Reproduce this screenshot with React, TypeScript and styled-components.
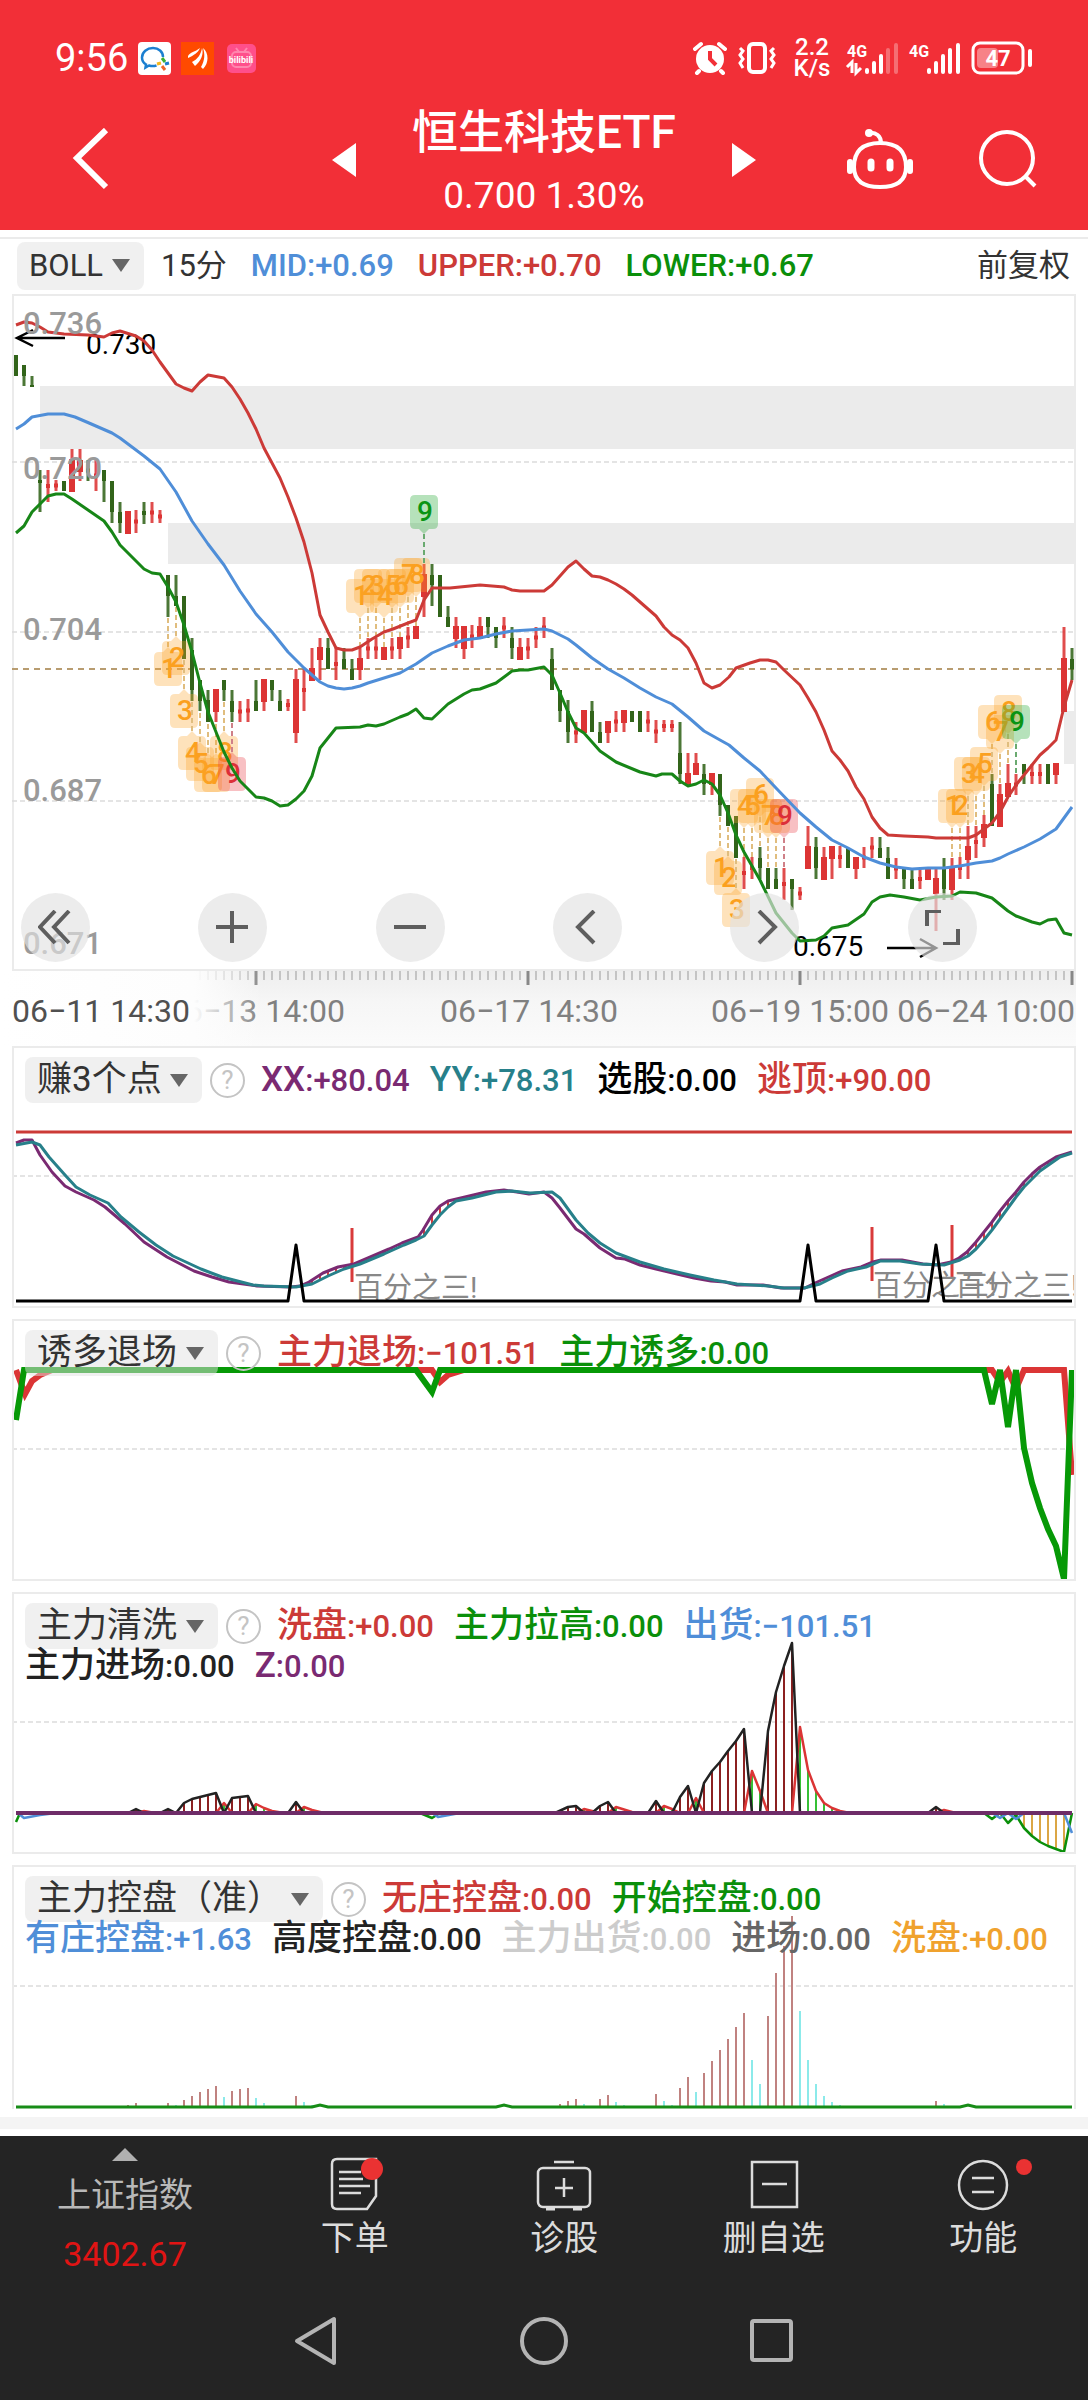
import React from "react";
import styled, { createGlobalStyle } from "styled-components";

const color = {
  brand: "#f22f37",
  red: "#cc3a37",
  green: "#0a8f0a",
  blue: "#4f8ed8",
  purple: "#7a2a72",
  teal: "#27808a",
  ink: "#222222",
  pill: "rgba(225, 225, 225, 0.5)",
  frame: "#ebebeb",
  grid: "#dcdcdc",
  dark: "#242424",
  icon: "#dcdcdc",
};

const GlobalStyle = createGlobalStyle`
  * { box-sizing: border-box; }
  body {
    margin: 0;
    background: #fff;
    color: ${color.ink};
    font-family: Roboto, "Noto Sans CJK SC", sans-serif;
  }
  button, select { font: inherit; color: inherit; border: 0; padding: 0; margin: 0; background: none; }
  svg { display: block; }
`;

/* ---------- layout ---------- */

const Header = styled.header`
  background: ${color.brand};
  color: #fff;
  padding: 36px 55px 0;
`;

const StatusBar = styled.div`
  display: flex;
  align-items: center;
  justify-content: space-between;
  height: 44px;
`;

const StatusGroup = styled.div`
  display: flex;
  align-items: center;
  gap: 10px;
`;

const Clock = styled.span`
  font-size: 38px;
  line-height: 44px;
`;

const Speed = styled.span`
  font-size: 24px;
  line-height: 21px;
  text-align: center;
  font-weight: 500;
  width: 50px;
  padding: 0 6px;
`;

const TitleBar = styled.div`
  display: grid;
  grid-template-columns: 1fr auto 1fr;
  align-items: center;
  height: 150px;
  padding-top: 10px;
`;

const TitleActions = styled.div`
  display: flex;
  justify-content: flex-end;
  gap: 64px;
  margin-right: -5px;
`;

const TitleCenter = styled.div`
  display: grid;
  grid-template-columns: 24px 376px 24px;
  align-items: center;
  text-align: center;
`;

const TitleText = styled.div`
  padding-top: 8px;
`;

const Title = styled.h1`
  margin: 0;
  font-size: 46px;
  font-weight: 500;
  line-height: 64px;
`;

const Quote = styled.p`
  margin: 0;
  font-size: 37px;
  line-height: 64px;
`;

const IconButton = styled.button`
  display: grid;
  justify-items: start;
  cursor: pointer;
`;

const Toolbar = styled.div`
  display: flex;
  align-items: center;
  gap: 17px;
  margin-top: 7px;
  border-top: 2px solid ${color.frame};
  padding: 2px 18px 4px 17px;
  height: 57px;
`;

const Pill = styled.label<{ $size: number }>`
  display: inline-grid;
  align-items: center;
  background: ${color.pill};
  border-radius: 8px;
  height: ${(p) => p.$size}px;
  color: #333;

  > * { grid-area: 1 / 1; }
  > svg { justify-self: end; margin-right: 14px; pointer-events: none; }
`;

const PillSelect = styled.select<{ $font: number }>`
  appearance: none;
  font-size: ${(p) => p.$font}px;
  line-height: 44px;
  padding: 0 40px 0 12px;
  cursor: pointer;
`;

const Values = styled.div`
  display: flex;
  gap: 24px;
  flex: 1;
  margin-left: 7px;
`;

const Plain = styled.span<{ $tone?: string }>`
  font-size: 31px;
  line-height: 44px;
  white-space: nowrap;
  color: ${(p) => p.$tone || "#333"};
`;

const Reading = styled(Plain)`
  font-weight: 500;
`;

const Main = styled.main`
  display: grid;
`;

const PriceBox = styled.section`
  display: grid;
  margin: 0 12px;
  box-shadow: inset 0 0 0 2px ${color.frame};

  > * { grid-area: 1 / 1; }
`;

const ChartSvg = styled.svg`
  width: 100%;
  height: auto;
`;

const ZoomRow = styled.div`
  display: grid;
  grid-template-columns: repeat(6, 1fr);
  align-self: end;
  padding: 0 0 9px 9px;
  margin-right: -9px;
`;

const RoundButton = styled.button`
  display: grid;
  place-items: center;
  width: 69px;
  height: 69px;
  border-radius: 50%;
  background: rgba(226, 226, 226, 0.65);
  cursor: pointer;
`;

const Panels = styled.div`
  display: grid;
  gap: 11px;
  padding: 0 12px 8px;
`;

const Panel = styled.section<{ $open?: boolean }>`
  display: grid;
  min-width: 0;
  border: 2px solid ${color.frame};
  border-bottom-width: ${(p) => (p.$open ? 0 : 2)}px;

  > * { grid-area: 1 / 1; min-width: 0; }
`;

const LegendArea = styled.div`
  align-self: start;
  padding: 9px 11px;
`;

const LegendRow = styled.div<{ $height: number }>`
  display: flex;
  align-items: center;
  gap: 20px;
  height: ${(p) => p.$height}px;
`;

const Selector = styled.div`
  display: flex;
  align-items: center;
  gap: 8px;
  margin-right: -4px;
`;

const Help = styled.button`
  width: 35px;
  height: 35px;
  border: 2px solid #c4c4c4;
  border-radius: 50%;
  color: #c4c4c4;
  font-size: 26px;
  line-height: 30px;
  cursor: pointer;
`;

const Entry = styled.span<{ $tone: string }>`
  display: inline-flex;
  align-items: baseline;
  color: ${(p) => p.$tone};
  font-weight: 500;
  line-height: 44px;
  white-space: nowrap;
`;

const Name = styled.span`
  font-size: 35px;
`;

const Amount = styled.span`
  font-size: 31px;
`;

const Divider = styled.div`
  height: 19px;
  background: #f4f4f4;
  border-bottom: 7px solid #fff;
`;

const Footer = styled.footer`
  background: ${color.dark};
  color: #dcdcdc;
`;

const TabBar = styled.nav`
  display: grid;
  grid-template-columns: 250px repeat(4, 1fr);
  height: 156px;
`;

const Tab = styled.button`
  display: grid;
  justify-items: center;
  align-content: start;
  gap: 1px;
  padding-top: 20px;
  font-size: 34px;
  line-height: 50px;
  cursor: pointer;
`;

const IndexTab = styled(Tab)`
  gap: 9px;
  padding-top: 12px;
  color: #b8b8b8;
`;

const IndexValue = styled.span`
  color: #e01414;
`;

const SystemBar = styled.div`
  display: flex;
  justify-content: center;
  gap: 180px;
  padding: 24px 0 34px;
`;

/* ---------- data ---------- */

type Candle = [up: 0 | 1, high: number, low: number, top?: number, bottom?: number];

const candles: Candle[] = [
  [0, 355, 376, 355, 376], [0, 365, 386, 365, 376], [0, 376, 387, 385, 387], [0, 470, 512, 480, 483],
  [1, 470, 502], [1, 480, 491], [0, 481, 491, 481, 491], [1, 449, 492, 459, 492],
  [1, 449, 481, 460, 472], [0, 460, 481], [1, 460, 491], [0, 470, 502, 470, 481],
  [0, 481, 523, 481, 512], [0, 502, 533, 512, 523], [1, 511, 534, 511, 534], [1, 510, 533],
  [0, 502, 524], [1, 502, 523], [1, 510, 523], [0, 575, 617, 575, 596],
  [0, 575, 606, 596, 606], [0, 596, 659, 596, 659], [0, 638, 701, 650, 690], [0, 680, 711, 680, 701],
  [0, 690, 722, 700, 722], [1, 689, 722, 689, 712], [0, 680, 701, 680, 690], [0, 690, 722, 701, 712],
  [1, 701, 722], [1, 699, 722], [0, 680, 711, 701, 711], [1, 679, 711, 679, 702],
  [0, 680, 701, 680, 690], [0, 690, 711, 701, 711], [1, 699, 711], [1, 669, 743, 679, 733],
  [1, 669, 711], [1, 648, 681, 668, 681], [1, 638, 680, 647, 660], [0, 638, 669, 648, 669],
  [1, 648, 680], [0, 648, 669, 659, 669], [0, 659, 680, 669, 680], [1, 648, 680, 658, 670],
  [1, 638, 659], [1, 638, 659], [1, 647, 660, 647, 660], [1, 638, 659],
  [1, 637, 659, 637, 649], [1, 627, 648], [1, 626, 639, 626, 639], [1, 564, 617, 574, 597],
  [0, 564, 606, 575, 585], [0, 575, 617, 575, 617], [0, 606, 627, 617, 627], [1, 617, 648, 626, 639],
  [1, 626, 659, 626, 649], [1, 625, 648], [1, 617, 639, 626, 639], [0, 617, 638, 617, 627],
  [0, 627, 648, 627, 638], [1, 617, 638], [0, 627, 659, 638, 648], [1, 638, 660, 647, 660],
  [1, 638, 659], [1, 627, 648], [1, 617, 638], [0, 648, 690, 659, 690],
  [0, 690, 722, 690, 711], [0, 700, 743, 711, 732], [1, 722, 743], [1, 710, 733, 710, 733],
  [0, 701, 732, 711, 732], [0, 722, 743, 732, 743], [1, 721, 743, 721, 733], [1, 711, 732],
  [1, 710, 732, 710, 723], [0, 711, 722, 711, 722], [0, 711, 732, 711, 732], [1, 711, 732],
  [1, 720, 743], [1, 720, 732], [1, 720, 732], [0, 722, 784, 753, 774],
  [1, 753, 785, 773, 785], [1, 753, 775, 763, 775], [0, 764, 795, 774, 784], [1, 773, 795, 773, 785],
  [0, 774, 816, 774, 805], [0, 805, 826, 805, 826], [0, 816, 858, 816, 858], [1, 857, 889],
  [1, 857, 879], [0, 847, 879, 858, 868], [0, 868, 889, 868, 889], [0, 868, 889, 879, 889],
  [1, 868, 900], [0, 879, 910, 879, 889], [1, 887, 900], [1, 826, 869, 846, 869],
  [0, 837, 879, 847, 868], [1, 847, 880, 857, 880], [1, 846, 879, 846, 859], [1, 846, 868],
  [0, 848, 868, 848, 868], [1, 857, 879, 857, 869], [1, 847, 868], [1, 837, 858],
  [0, 837, 858, 848, 858], [0, 847, 879, 858, 879], [1, 858, 879], [0, 868, 889, 868, 879],
  [0, 868, 889, 879, 889], [1, 869, 889], [1, 867, 880, 867, 880], [1, 868, 931, 878, 894],
  [0, 858, 900, 868, 889], [1, 858, 900, 868, 890], [1, 857, 879], [1, 826, 879, 846, 860],
  [1, 826, 858], [1, 815, 847, 824, 838], [0, 774, 826, 784, 826], [1, 784, 827, 794, 827],
  [1, 764, 797, 783, 797], [1, 774, 795], [0, 764, 784, 764, 774], [1, 764, 784],
  [1, 764, 784], [0, 764, 784, 764, 784], [1, 763, 784, 763, 775], [1, 627, 712, 658, 712],
  [0, 648, 680, 659, 669],
];

const upperBand =
  "16,325 24,322 32,323 40,327 48,332 64,334 88,335 104,337 112,333 120,331 136,336 144,341 152,350 160,362 168,373 176,384 184,388 192,391 200,382 208,375 224,378 232,387 240,399 248,413 256,429 264,448 272,463 280,478 288,497 296,518 304,542 312,573 320,615 328,632 336,648 344,650 352,650 360,647 372,639 384,632 393,629 408,623 416,620 424,600 432,588 450,588 480,585 504,587 512,590 520,591 544,591 552,585 568,567 576,561 584,569 592,576 600,577 608,580 616,584 624,589 632,595 648,609 656,616 664,627 672,635 680,640 688,648 696,663 704,683 712,688 720,685 729,677 736,668 750,663 760,660 768,660 776,662 784,670 800,685 808,698 816,712 824,730 832,751 840,760 848,771 856,787 864,799 872,817 880,828 888,835 904,836 928,837 936,838 944,838 968,838 976,835 992,823 1000,812 1008,797 1016,785 1024,775 1032,765 1040,755 1048,748 1056,740 1064,707 1072,680";

const middleBand =
  "16,429 24,424 32,417 48,414 64,414 75,417 89,423 112,433 120,438 144,456 160,469 176,492 192,521 208,544 224,565 240,591 256,614 272,632 288,652 304,668 320,682 328,686 336,688 344,689 352,688 360,686 368,683 384,678 400,673 416,664 432,653 448,646 464,640 480,638 496,634 512,631 544,629 552,631 568,639 576,645 592,658 608,669 624,678 640,688 656,697 672,704 688,717 704,731 720,740 729,745 744,758 760,771 776,788 800,813 816,827 832,840 848,848 864,857 880,863 896,867 912,869 928,868 944,868 960,866 976,863 992,861 1000,858 1008,854 1024,847 1040,839 1056,829 1064,818 1072,807";

const lowerBand =
  "16,533 24,526 32,512 40,504 48,496 56,494 64,494 72,499 88,510 104,521 112,532 120,545 128,553 136,561 144,569 152,573 160,574 168,587 176,602 184,625 192,652 200,683 208,712 216,732 224,752 232,768 240,781 248,789 256,797 264,798 272,801 280,806 288,805 296,799 304,791 312,776 320,748 336,728 360,727 368,725 376,726 384,724 400,717 408,714 416,709 424,718 432,719 448,704 464,694 472,690 480,689 496,683 512,671 520,670 528,670 544,667 552,675 560,693 568,712 576,728 584,733 600,751 616,762 640,772 656,776 662,774 672,774 680,781 688,786 696,784 704,780 712,784 720,795 728,813 736,835 744,852 760,880 776,913 792,933 800,941 816,940 824,936 832,928 848,925 864,914 872,902 880,897 890,895 904,897 920,900 936,897 952,896 960,892 976,893 992,898 1008,911 1016,916 1032,922 1040,924 1048,920 1056,919 1064,933 1072,935";

type Mark = [index: number, top: number, digit: number, side: "above" | "below", tone?: "green" | "red"];

const marks: Mark[] = [
  [19, 652, 1, "below"], [20, 641, 2, "below"], [21, 694, 3, "below"], [22, 736, 4, "below"],
  [23, 747, 5, "below"], [24, 758, 6, "below"], [25, 758, 7, "below"], [26, 736, 8, "below"],
  [27, 757, 9, "below", "red"],
  [43, 579, 1, "above"], [44, 569, 2, "above"], [45, 569, 3, "above"], [46, 579, 4, "above"],
  [47, 569, 5, "above"], [48, 569, 6, "above"], [49, 558, 7, "above"], [50, 558, 8, "above"],
  [51, 495, 9, "above", "green"],
  [88, 851, 1, "below"], [89, 861, 2, "below"], [90, 893, 3, "below"],
  [91, 789, 4, "above"], [92, 789, 5, "above"], [93, 778, 6, "above"], [94, 799, 7, "above"],
  [95, 799, 8, "above"], [96, 799, 9, "above", "red"],
  [117, 789, 1, "above"], [118, 789, 2, "above"], [119, 757, 3, "above"], [120, 757, 4, "above"],
  [121, 747, 5, "above"], [122, 705, 6, "above"], [123, 715, 7, "above"], [124, 695, 8, "above"],
  [125, 705, 9, "above", "green"],
];

const markTones = {
  orange: { box: "#fba42c", text: "#fba01e", dash: "#e0bd7e" },
  green: { box: "#1ca52a", text: "#0a9414", dash: "#6aaa70" },
  red: { box: "#ea3a44", text: "#dc2f38", dash: "#cf8088" },
};

const xx =
  "16,1143 24,1140 32,1140 40,1155 52,1172 65,1186 76,1192 94,1200 105,1207 125,1224 144,1242 167,1257 194,1271 212,1277 229,1282 257,1286 291,1287 300,1286 309,1282 323,1273 338,1267 354,1264 368,1258 389,1249 402,1243 418,1237 423,1230 432,1215 440,1206 448,1201 465,1197 486,1192 504,1190 517,1192 529,1194 544,1192 552,1198 560,1208 576,1229 584,1234 600,1248 616,1258 625,1259 640,1265 656,1269 677,1274 694,1278 711,1281 725,1282 737,1285 763,1285 781,1288 805,1288 815,1283 833,1275 842,1271 861,1267 873,1262 881,1260 902,1260 923,1264 937,1265 951,1262 959,1258 967,1252 976,1242 984,1232 992,1222 1000,1211 1008,1201 1016,1192 1024,1182 1032,1174 1040,1167 1056,1157 1072,1152";

const yy =
  "16,1145 32,1142 40,1145 49,1157 65,1175 76,1187 90,1195 108,1203 121,1217 139,1232 156,1245 173,1256 201,1269 222,1277 253,1285 264,1286 296,1287 312,1284 328,1276 344,1269 360,1264 384,1254 404,1245 416,1240 424,1236 432,1225 440,1215 448,1207 456,1201 472,1198 496,1192 512,1191 530,1193 552,1192 560,1198 568,1209 576,1220 588,1233 600,1243 616,1253 640,1262 664,1269 690,1275 714,1280 737,1284 768,1286 784,1288 804,1288 820,1284 832,1278 848,1271 866,1267 880,1261 900,1261 920,1264 944,1265 960,1260 968,1256 976,1249 984,1240 992,1230 1000,1219 1008,1208 1016,1197 1024,1187 1032,1179 1040,1171 1050,1164 1060,1157 1072,1153";

const entering: [number, number][] = [
  [16, 1813], [128, 1813], [136, 1809], [144, 1813], [160, 1813], [168, 1809], [176, 1813], [184, 1803],
  [192, 1799], [200, 1797], [208, 1795], [216, 1793], [224, 1813], [232, 1798], [240, 1797], [248, 1796],
  [256, 1813], [288, 1813], [296, 1802], [304, 1813], [555, 1813], [568, 1807], [576, 1806], [584, 1813],
  [592, 1813], [600, 1806], [608, 1802], [616, 1813], [648, 1813], [656, 1801], [664, 1813], [672, 1813],
  [680, 1797], [688, 1786], [696, 1813], [704, 1783], [712, 1771], [720, 1762], [728, 1751], [736, 1741],
  [744, 1729], [752, 1813], [760, 1813], [768, 1731], [776, 1692], [784, 1666], [792, 1643], [800, 1813],
  [928, 1813], [936, 1807], [944, 1813], [1072, 1813],
];

const washing: [number, number][] = [
  [16, 1813], [136, 1813], [144, 1811], [155, 1813], [216, 1813], [224, 1803], [232, 1813], [248, 1813],
  [256, 1804], [264, 1808], [272, 1811], [284, 1813], [296, 1813], [304, 1807], [312, 1810], [324, 1813],
  [576, 1813], [584, 1809], [596, 1812], [608, 1813], [616, 1807], [632, 1812], [656, 1813], [664, 1806],
  [672, 1809], [680, 1813], [688, 1813], [696, 1798], [704, 1813], [744, 1813], [752, 1771], [760, 1791],
  [768, 1813], [792, 1813], [800, 1727], [808, 1770], [816, 1791], [824, 1803], [832, 1808], [840, 1811],
  [850, 1813], [936, 1813], [944, 1810], [956, 1813],
];

const exitCurve: [number, number][] = [
  [1024, 1828], [1032, 1836], [1040, 1842], [1048, 1846], [1056, 1849], [1064, 1852],
];

const holdBars: [number, number][] = [
  [128, 2105], [136, 2103], [168, 2103], [184, 2100], [192, 2096], [200, 2092], [208, 2089], [216, 2086],
  [232, 2091], [240, 2089], [248, 2088], [296, 2096], [560, 2104], [568, 2101], [576, 2099], [600, 2099],
  [608, 2095], [656, 2094], [680, 2088], [688, 2077], [704, 2073], [712, 2061], [720, 2050], [728, 2039],
  [736, 2027], [744, 2013], [768, 2016], [776, 1973], [784, 1946], [792, 1916], [936, 2101],
];

const washBars: [number, number][] = [
  [176, 2105], [224, 2097], [256, 2098], [264, 2103], [304, 2102], [312, 2105], [584, 2104], [616, 2102],
  [624, 2105], [664, 2101], [672, 2105], [696, 2092], [752, 2060], [760, 2084], [800, 2011], [808, 2060],
  [816, 2084], [824, 2096], [832, 2102], [840, 2105], [944, 2104],
];

const steps = Array.from({ length: 133 }, (_, i) => 16 + i * 8);
const joinPoints = (pts: [number, number][]) => pts.map((p) => p.join(",")).join(" ");

/** Height of a polyline at a given x, by linear interpolation. */
function heightAt(line: string, x: number) {
  const pts = line.split(" ").map((p) => p.split(",").map(Number));
  const k = Math.max(1, pts.findIndex((p) => p[0] >= x));
  const [ax, ay] = pts[k - 1];
  const [bx, by] = pts[k];
  return ay + ((by - ay) * (x - ax)) / (bx - ax);
}

/* ---------- charts ---------- */

function GridLine({ y }: { y: number }) {
  return <line x1="12" x2="1075" y1={y} y2={y} stroke={color.grid} strokeWidth="1.5" strokeDasharray="5 3" />;
}

function CandleShape({ index, candle }: { index: number; candle: Candle }) {
  const [up, high, low, top, bottom] = candle;
  const x = 16 + index * 8;
  const fill = up ? "#dc3434" : "#32641a";
  const width = up ? 6 : 4;
  return (
    <g fill={fill}>
      <rect x={x - 1.5} y={high} width="3" height={low - high} opacity="0.88" />
      {top !== undefined && bottom !== undefined ? (
        <rect x={x - width / 2} y={top} width={width} height={Math.max(2, bottom - top)} />
      ) : (
        <rect x={x - 2} y={(high + low) / 2 - 2} width="4" height="4" />
      )}
    </g>
  );
}

function MarkShape({ mark }: { mark: Mark }) {
  const [index, top, digit, side, toneName] = mark;
  const tone = markTones[toneName || "orange"];
  const x = 16 + index * 8;
  const above = side === "above";
  const tip = above ? top + 39 : top - 5;
  const base = above ? top + 34 : top;
  return (
    <g>
      <line
        x1={x}
        x2={x}
        y1={tip}
        y2={above ? candles[index][1] : candles[index][2]}
        stroke={tone.dash}
        strokeWidth="2"
        strokeDasharray="5 3"
      />
      <path
        d={`M${x - 9} ${top}H${x - 5}${above ? "" : `L${x} ${tip}L${x + 5} ${base}`}H${x + 9}q5 0 5 5v24q0 5 -5 5${
          above ? `H${x + 5}L${x} ${tip}L${x - 5} ${base}` : ""
        }H${x - 9}q-5 0 -5 -5v-24q0 -5 5 -5z`}
        fill={tone.box}
        opacity="0.32"
      />
      <text x={x + 1} y={top + 26} fontSize="28" textAnchor="middle" fill={tone.text} fontWeight="500">
        {digit}
      </text>
    </g>
  );
}

function PriceChart() {
  const scale: [string, number][] = [
    ["0.736", 335], ["0.720", 480], ["0.704", 641], ["0.687", 802], ["0.671", 955],
  ];
  return (
    <ChartSvg viewBox="12 294 1064 677" role="img" aria-label="K线图">
      <g fill="#ebebeb">
        <rect x="40" y="386" width="1036" height="63" />
        <rect x="168" y="523" width="908" height="41" />
        <rect x="1064" y="711" width="12" height="53" />
      </g>
      <GridLine y={462} />
      <GridLine y={632} />
      <GridLine y={801} />
      <line x1="12" x2="1075" y1="669" y2="669" stroke="#b89c70" strokeWidth="2" strokeDasharray="6 5" />
      {candles.map((c, i) => (
        <CandleShape key={i} index={i} candle={c} />
      ))}
      {marks.map((m) => (
        <MarkShape key={m[0]} mark={m} />
      ))}
      <g fontSize="28" fill="#000">
        <text x="86" y="354">0.730</text>
        <text x="793" y="956">0.675</text>
      </g>
      <g fill="none" strokeWidth="3" strokeLinejoin="round">
        <polyline points={upperBand} stroke={color.red} />
        <polyline points={middleBand} stroke={color.blue} />
        <polyline points={lowerBand} stroke="#178617" />
      </g>
      <g fill="none" stroke="#000" strokeWidth="2.5">
        <path d="M65 338H17M33 330L17 338L33 346" />
        <path d="M887 948H936M920 939L936 948L920 957" />
      </g>
      <g fontSize="31" fontWeight="500" fill="#9a9a9a">
        {scale.map(([label, y]) => (
          <text key={label} x="23" y={y - 1}>{label}</text>
        ))}
      </g>
    </ChartSvg>
  );
}

function TimeAxis() {
  const major = [256, 528, 800, 1072];
  return (
    <ChartSvg viewBox="0 971 1088 75" role="img" aria-label="时间轴">
      <defs>
        <linearGradient id="axis-shade" x1="0" x2="0" y1="0" y2="1">
          <stop offset="0" stopColor="#eeeeee" />
          <stop offset="0.4" stopColor="#f6f6f6" />
          <stop offset="1" stopColor="#fbfbfb" />
        </linearGradient>
        <linearGradient id="axis-fade" x1="0" x2="1" y1="0" y2="0">
          <stop offset="0" stopColor="#fff" />
          <stop offset="0.74" stopColor="#fdfdfd" />
          <stop offset="1" stopColor="#fdfdfd" stopOpacity="0" />
        </linearGradient>
      </defs>
      <rect x="0" y="971" width="1076" height="75" fill="url(#axis-shade)" />
      {steps.map((x) => (
        <line key={x} x1={x} x2={x} y1="971" y2="980" stroke="#999" strokeWidth="1" />
      ))}
      {major.map((x) => (
        <line key={x} x1={x} x2={x} y1="971" y2="985" stroke="#888" strokeWidth="3" />
      ))}
      <g fontSize="32" fill="#808080" textAnchor="middle">
        <text x="256" y="1022">06−13 14:00</text>
        <text x="529" y="1022">06−17 14:30</text>
        <text x="800" y="1022">06−19 15:00</text>
        <text x="1075" y="1022" textAnchor="end">06−24 10:00</text>
      </g>
      <rect x="0" y="971" width="262" height="75" fill="url(#axis-fade)" />
      <text x="12" y="1022" fontSize="32" fill="#505050">06−11 14:30</text>
    </ChartSvg>
  );
}

function TrendChart() {
  return (
    <ChartSvg viewBox="14 1048 1060 258" role="img" aria-label="赚3个点">
      <GridLine y={1176} />
      <line x1="16" x2="1072" y1="1132" y2="1132" stroke={color.red} strokeWidth="3" />
      <g stroke="#d93a3a" strokeWidth="2">
        {steps
          .filter((x) => heightAt(yy, x) - heightAt(xx, x) > 1 && x > 300)
          .map((x) => (
            <line key={x} x1={x} x2={x} y1={heightAt(xx, x)} y2={heightAt(yy, x)} />
          ))}
        <path d="M352 1228V1282M872 1227V1281M952 1225V1279" strokeWidth="3" />
      </g>
      <g fontSize="29" fill="#888">
        <text x="354" y="1298">百分之三!</text>
        <text x="873" y="1296">百分之三!</text>
        <text x="955" y="1296">百分之三!</text>
      </g>
      <g fill="none" strokeWidth="3" strokeLinejoin="round">
        <polyline points={xx} stroke={color.purple} />
        <polyline points={yy} stroke={color.teal} />
        <path
          d="M16 1301H288L296 1245L304 1301H800L808 1245L816 1301H928L936 1245L944 1301H1072"
          stroke="#000"
        />
      </g>
    </ChartSvg>
  );
}

function ExitChart() {
  return (
    <ChartSvg viewBox="14 1321 1060 258" role="img" aria-label="诱多退场">
      <GridLine y={1449} />
      <g fill="none" strokeWidth="6">
        <path
          d="M16 1370L25 1394L32 1381L40 1375L52 1370H432L440 1382L448 1375L464 1370H992L1000 1382L1008 1371L1016 1389L1024 1370H1064L1072 1475"
          stroke="#db3535"
        />
        <path
          d="M16 1420L24 1370H416L432 1392L440 1370H984L992 1404L1000 1370L1008 1427L1016 1370L1024 1448L1032 1483L1040 1508L1048 1529L1056 1546L1064 1579L1072 1370"
          stroke="#069906"
        />
      </g>
    </ChartSvg>
  );
}

function WashChart() {
  const base = 1813;
  return (
    <ChartSvg viewBox="14 1594 1060 258" role="img" aria-label="主力清洗">
      <GridLine y={1722} />
      <g strokeWidth="2">
        {washing.filter((p) => p[1] < base - 2).map(([x, y]) => (
          <line key={`w${x}`} x1={x} x2={x} y1={y} y2={base} stroke="#35c035" />
        ))}
        {entering.filter((p) => p[1] < base).map(([x, y]) => (
          <line key={`e${x}`} x1={x} x2={x} y1={y} y2={base} stroke="#8c2020" />
        ))}
        {exitCurve.map(([x, y]) => (
          <line key={`x${x}`} x1={x} x2={x} y1={base} y2={y} stroke="#dba645" />
        ))}
      </g>
      <g fill="none" strokeWidth="2.5" strokeLinejoin="round">
        <polyline points={joinPoints(washing)} stroke="#db3535" />
        <polyline points={joinPoints(entering)} stroke={color.ink} />
        <path
          d={`M16 1822L20 1813H420L432 1818L440 1813H984L992 1819L1000 1813L1008 1823L1016 1815L${exitCurve
            .map((p) => p.join(" "))
            .join("L")}L1072 1813`}
          stroke={color.green}
        />
        <path
          d="M18 1813L24 1818L40 1815L56 1813M432 1813L438 1817L460 1813M992 1813L1000 1818L1008 1813L1016 1819L1024 1813H1064L1072 1833"
          stroke={color.blue}
        />
      </g>
      <line x1="16" x2="1072" y1={base} y2={base} stroke="#6e2c68" strokeWidth="4" />
    </ChartSvg>
  );
}

function ControlChart() {
  return (
    <ChartSvg viewBox="14 1867 1060 242" role="img" aria-label="主力控盘">
      <GridLine y={1986} />
      <g strokeWidth="2">
        {holdBars.map(([x, y]) => (
          <line key={x} x1={x} x2={x} y1={y} y2="2107" stroke="#c08280" />
        ))}
        {washBars.map(([x, y]) => (
          <line key={x} x1={x} x2={x} y1={y} y2="2107" stroke="#8ceaea" />
        ))}
      </g>
      <path
        d="M16 2107H312L320 2105L328 2107H496L504 2105L512 2107H960L968 2105L976 2107H1072"
        stroke="#178c17"
        strokeWidth="3"
        fill="none"
      />
    </ChartSvg>
  );
}

/* ---------- parts ---------- */

function DropDown({ label, title, size = 46, font = 35 }: { label: string; title: string; size?: number; font?: number }) {
  return (
    <Pill $size={size}>
      <PillSelect $font={font} aria-label={title}>
        <option>{label}</option>
      </PillSelect>
      <svg width="18" height="13" viewBox="0 0 18 13" aria-hidden="true">
        <path d="M0 0H18L9 13z" fill="#666" />
      </svg>
    </Pill>
  );
}

type Item = { name: string; value: string; tone: string };

function Legend({ items }: { items: Item[] }) {
  return (
    <>
      {items.map((it) => (
        <Entry key={it.name} $tone={it.tone}>
          <Name>{it.name}</Name>
          <Amount>:{it.value}</Amount>
        </Entry>
      ))}
    </>
  );
}

type IndicatorProps = {
  label: string;
  first: Item[];
  second?: Item[];
  open?: boolean;
  children: React.ReactNode;
};

function Indicator({ label, first, second, open, children }: IndicatorProps) {
  return (
    <Panel $open={open}>
      {children}
      <LegendArea>
        <LegendRow $height={46}>
          <Selector>
            <DropDown label={label} title="指标" />
            <Help type="button" aria-label={`${label} 说明`}>?</Help>
          </Selector>
          <Legend items={first} />
        </LegendRow>
        {second && (
          <LegendRow $height={34}>
            <Legend items={second} />
          </LegendRow>
        )}
      </LegendArea>
    </Panel>
  );
}

const SignalSvg = styled.svg`
  overflow: visible;
`;

function Signal({ weak }: { weak?: boolean }) {
  return (
    <SignalSvg width="52" height="34" viewBox="0 0 52 34" aria-hidden="true">
      <text x="0" y="16" fontSize="16" fontWeight="700" fill="#fff">4G</text>
      <g stroke="#fff" strokeWidth="4" strokeLinecap="round">
        <path d={weak ? "M20 29V31M27 22V31M34 15V31" : "M20 29V31M27 22V31M34 15V31M41 9V31M49 4V31"} />
        {weak && <path d="M41 9V31M49 4V31" opacity="0.3" />}
      </g>
      {weak && <path d="M0 26L5 21V32M9 22V32L14 27" fill="none" stroke="#fff" strokeWidth="3" />}
    </SignalSvg>
  );
}

function StatusIcons() {
  return (
    <StatusGroup>
      <svg width="34" height="34" viewBox="0 0 34 34" aria-label="闹钟">
        <circle cx="17" cy="18" r="14" fill="#fff" />
        <path d="M2 8L8 3M32 8L26 3M6 30L4 32M28 30L30 32" stroke="#fff" strokeWidth="4" strokeLinecap="round" />
        <path d="M17 10V18L23 24" stroke={color.brand} strokeWidth="4" fill="none" />
      </svg>
      <svg width="40" height="34" viewBox="0 0 40 34" aria-label="振动">
        <rect x="12" y="3" width="16" height="28" rx="4" fill="none" stroke="#fff" strokeWidth="4" />
        <path
          d="M3 7L6 10L3 14L6 18L3 22L6 27M37 7L34 10L37 14L34 18L37 22L34 27"
          fill="none"
          stroke="#fff"
          strokeWidth="3"
        />
      </svg>
      <Speed>2.2 K/s</Speed>
      <Signal weak />
      <Signal />
      <svg width="62" height="34" viewBox="0 0 62 34" aria-label="电量">
        <rect x="2" y="2" width="50" height="30" rx="7" fill="none" stroke="#fff" strokeWidth="3" />
        <rect x="6" y="7" width="21" height="20" rx="4" fill="#fff" opacity="0.4" />
        <path d="M59 10V24" stroke="#fff" strokeWidth="4" strokeLinecap="round" />
        <text x="27" y="25" fontSize="22" fontWeight="700" textAnchor="middle" fill="#fff">47</text>
      </svg>
    </StatusGroup>
  );
}

function AppBadges() {
  return (
    <>
      <svg width="33" height="33" viewBox="0 0 33 33" aria-hidden="true">
        <rect width="33" height="33" rx="4" fill="#fff" />
        <path
          d="M25 15C25 9.5 20.500 6 15 6C9 6 4 10 4 15.5C4 18.5 5.500 21 8 22.5L7.5 25.5L11 23.5C13.500 24.3 16 24.3 18.500 23.5"
          fill="none"
          stroke="#1c7fd0"
          strokeWidth="2.5"
        />
        <path d="M24 16L27 20" stroke="#3cb034" strokeWidth="3" />
        <path d="M27 22L31 21" stroke="#1c7fd0" strokeWidth="3" />
        <path d="M24 24L27 28" stroke="#f0642a" strokeWidth="3" />
        <path d="M19 22L23 21" stroke="#f6b81c" strokeWidth="3" />
      </svg>
      <svg width="33" height="33" viewBox="0 0 33 33" aria-hidden="true">
        <rect width="33" height="33" fill="#ff4a00" />
        <path
          d="M7 14C9 10 14 10 19 6C17 11 13 13 7 16zM11 20C17 17 20 12 21 6C23 12 20 19 14 24zM20 25C24 18 24 12 22 6C28 11 28 21 22 27z"
          fill="#fff"
        />
      </svg>
      <svg width="32" height="29" viewBox="-3 0 32 29" aria-hidden="true">
        <rect width="29" height="29" rx="5" fill="#ff4f8b" />
        <rect x="5" y="8" width="19" height="15" rx="4" fill="none" stroke="#ff86ae" strokeWidth="2" />
        <path d="M9 4L12 8M20 4L17 8" stroke="#ff86ae" strokeWidth="2" />
        <text x="14" y="19" fontSize="9" fontWeight="700" textAnchor="middle" fill="#fff">bilibili</text>
      </svg>
    </>
  );
}

const panels: IndicatorProps[] = [
  {
    label: "赚3个点",
    first: [
      { name: "XX", value: "+80.04", tone: color.purple },
      { name: "YY", value: "+78.31", tone: color.teal },
      { name: "选股", value: "0.00", tone: "#000" },
      { name: "逃顶", value: "+90.00", tone: color.red },
    ],
    children: <TrendChart />,
  },
  {
    label: "诱多退场",
    first: [
      { name: "主力退场", value: "−101.51", tone: color.red },
      { name: "主力诱多", value: "0.00", tone: color.green },
    ],
    children: <ExitChart />,
  },
  {
    label: "主力清洗",
    first: [
      { name: "洗盘", value: "+0.00", tone: color.red },
      { name: "主力拉高", value: "0.00", tone: color.green },
      { name: "出货", value: "−101.51", tone: color.blue },
    ],
    second: [
      { name: "主力进场", value: "0.00", tone: color.ink },
      { name: "Z", value: "0.00", tone: color.purple },
    ],
    children: <WashChart />,
  },
  {
    label: "主力控盘（准）",
    open: true,
    first: [
      { name: "无庄控盘", value: "0.00", tone: color.red },
      { name: "开始控盘", value: "0.00", tone: color.green },
    ],
    second: [
      { name: "有庄控盘", value: "+1.63", tone: color.blue },
      { name: "高度控盘", value: "0.00", tone: color.ink },
      { name: "主力出货", value: "0.00", tone: "#cccccc" },
      { name: "进场", value: "0.00", tone: "#666666" },
      { name: "洗盘", value: "+0.00", tone: "#f0a22e" },
    ],
    children: <ControlChart />,
  },
];

const zoomButtons = [
  { label: "最早", path: "M17 1L2 17L17 33M31 1L16 17L31 33" },
  { label: "放大", path: "M1 17H33M17 1V33" },
  { label: "缩小", path: "M1 17H33" },
  { label: "向前", path: "M24 1L8 17L24 33" },
  { label: "向后", path: "M12 1L28 17L12 33" },
  { label: "全屏", path: "M2 16V1H16M33 19V34H18" },
];

const tabs = [
  {
    label: "下单",
    art: (
      <>
        <path d="M12 3H51V40L42 53H12Q7 53 7 48V8Q7 3 12 3z" />
        <path d="M14 16H36M14 23H38M14 30H45M14 37H36" />
        <circle cx="47" cy="13" r="11" fill="#ea3232" stroke="none" />
      </>
    ),
  },
  {
    label: "诊股",
    art: (
      <>
        <rect x="4" y="12" width="52" height="39" rx="5" />
        <path d="M20 6H40M30 22V41M21 32H39" />
        <path d="M12 53H21M39 53H48" strokeWidth="3" />
      </>
    ),
  },
  {
    label: "删自选",
    art: (
      <>
        <rect x="8" y="6" width="45" height="45" />
        <path d="M18 28H43" />
      </>
    ),
  },
  {
    label: "功能",
    art: (
      <>
        <circle cx="30" cy="29" r="24" />
        <path d="M19 22H41M19 36H41" />
        <circle cx="71" cy="11" r="8" fill="#ea3232" stroke="none" />
      </>
    ),
  },
];

const TabIcon = styled.svg`
  overflow: visible;
`;

export default function App() {
  return (
    <>
      <GlobalStyle />
      <Header>
        <StatusBar>
          <StatusGroup>
            <Clock>9:56</Clock>
            <AppBadges />
          </StatusGroup>
          <StatusIcons />
        </StatusBar>
        <TitleBar>
          <IconButton type="button" aria-label="返回">
            <svg width="72" height="64" viewBox="0 0 72 64" fill="none" stroke="#fff" strokeWidth="6">
              <path d="M51 2L22 30L51 59" />
            </svg>
          </IconButton>
          <TitleCenter>
            <IconButton type="button" aria-label="上一只">
              <svg width="24" height="34" viewBox="0 0 24 34">
                <path d="M24 0V34L0 17z" fill="#fff" />
              </svg>
            </IconButton>
            <TitleText>
              <Title>恒生科技ETF</Title>
              <Quote>0.700 1.30%</Quote>
            </TitleText>
            <IconButton type="button" aria-label="下一只">
              <svg width="24" height="34" viewBox="0 0 24 34">
                <path d="M0 0V34L24 17z" fill="#fff" />
              </svg>
            </IconButton>
          </TitleCenter>
          <TitleActions>
            <IconButton type="button" aria-label="智能助手">
              <svg width="68" height="62" viewBox="0 0 68 62" fill="none" stroke="#fff" strokeWidth="4">
                <path d="M34 14C55 14 60 26 60 38C60 52 50 58 34 58C18 58 8 52 8 38C8 26 13 14 34 14z" />
                <path d="M23 4C30 3 35 7 35 14" />
                <circle cx="23" cy="4" r="4" fill="#fff" stroke="none" />
                <path d="M4 33V42M64 33V42" strokeWidth="6" strokeLinecap="round" />
                <path d="M25 33V39M44 33V39" strokeWidth="7" strokeLinecap="round" />
              </svg>
            </IconButton>
            <IconButton type="button" aria-label="搜索">
              <svg width="60" height="60" viewBox="0 0 60 60" fill="none" stroke="#fff" strokeWidth="4">
                <circle cx="29" cy="29" r="26" />
                <path d="M47 47L57 57" />
              </svg>
            </IconButton>
          </TitleActions>
        </TitleBar>
      </Header>

      <Main>
        <Toolbar>
          <DropDown label="BOLL" title="主图指标" size={48} font={31} />
          <Plain>15分</Plain>
          <Values>
            <Reading $tone={color.blue}>MID:+0.69</Reading>
            <Reading $tone={color.red}>UPPER:+0.70</Reading>
            <Reading $tone={color.green}>LOWER:+0.67</Reading>
          </Values>
          <Plain>前复权</Plain>
        </Toolbar>

        <PriceBox>
          <PriceChart />
          <ZoomRow>
            {zoomButtons.map((b) => (
              <RoundButton key={b.label} type="button" aria-label={b.label}>
                <svg width="35" height="35" viewBox="0 0 35 35" fill="none" stroke="#5e5e5e" strokeWidth="4">
                  <path d={b.path} />
                </svg>
              </RoundButton>
            ))}
          </ZoomRow>
        </PriceBox>
        <TimeAxis />

        <Panels>
          {panels.map((p) => (
            <Indicator key={p.label} {...p} />
          ))}
        </Panels>
        <Divider />
      </Main>

      <Footer>
        <TabBar>
          <IndexTab type="button">
            <svg width="26" height="13" viewBox="0 0 26 13" aria-hidden="true">
              <path d="M13 0L26 13H0z" fill="#b0b0b0" />
            </svg>
            <span>上证指数</span>
            <IndexValue>3402.67</IndexValue>
          </IndexTab>
          {tabs.map((t) => (
            <Tab key={t.label} type="button">
              <TabIcon
                width="60"
                height="56"
                viewBox="0 0 60 56"
                fill="none"
                stroke={color.icon}
                strokeWidth="2.5"
                aria-hidden="true"
              >
                {t.art}
              </TabIcon>
              <span>{t.label}</span>
            </Tab>
          ))}
        </TabBar>
        <SystemBar>
          <IconButton type="button" aria-label="后退">
            <svg width="46" height="50" viewBox="0 0 46 50" fill="none" stroke="#b4b4b4" strokeWidth="4" strokeLinejoin="round">
              <path d="M40 3V47L3 25z" />
            </svg>
          </IconButton>
          <IconButton type="button" aria-label="主页">
            <svg width="48" height="50" viewBox="0 0 48 50" fill="none" stroke="#b4b4b4" strokeWidth="4">
              <circle cx="24" cy="25" r="22" />
            </svg>
          </IconButton>
          <IconButton type="button" aria-label="最近任务">
            <svg width="46" height="50" viewBox="0 0 46 50" fill="none" stroke="#b4b4b4" strokeWidth="4">
              <rect x="4" y="5" width="39" height="39" rx="2" />
            </svg>
          </IconButton>
        </SystemBar>
      </Footer>
    </>
  );
}
